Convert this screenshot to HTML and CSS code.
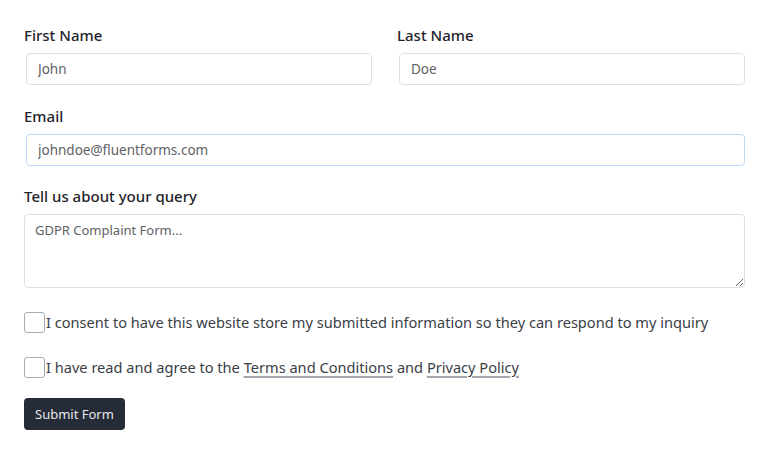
FILE: index.html
```html
<!DOCTYPE html>
<html lang="en">
<head>
<meta charset="utf-8">
<title>GDPR Form</title>
<link rel="stylesheet" href="styles.css">
</head>
<body>
<form class="form">
  <div class="row">
    <div class="field">
      <label class="label" for="fn">First Name</label>
      <input class="input" id="fn" type="text" value="John">
    </div>
    <div class="field">
      <label class="label" for="ln">Last Name</label>
      <input class="input" id="ln" type="text" value="Doe">
    </div>
  </div>
  <div class="field field-tight">
    <label class="label" for="em">Email</label>
    <input class="input input-focus" id="em" type="text" value="johndoe@fluentforms.com">
  </div>
  <div class="field field-last">
    <label class="label" for="q">Tell us about your query</label>
    <textarea class="textarea" id="q" placeholder="GDPR Complaint Form..."></textarea>
  </div>
  <label class="check">
    <input class="box" type="checkbox">
    <span>I consent to have this website store my submitted information so they can respond to my inquiry</span>
  </label>
  <label class="check">
    <input class="box" type="checkbox">
    <span>I have read and agree to the <a class="link" href="#">Terms and Conditions</a> and <a class="link" href="#">Privacy Policy</a></span>
  </label>
  <div class="actions">
    <button class="btn" type="button">Submit Form</button>
  </div>
</form>
</body>
</html>
```
FILE: styles.css
```css
* { box-sizing: border-box; }
html, body { margin: 0; background: #fff; }
body {
  font-family: "Noto Sans", "Open Sans", sans-serif;
  color: #2b2f36;
}
.form {
  padding: 25px 23px 0 24px;
  display: flex;
  flex-direction: column;
}
.row {
  display: grid;
  grid-template-columns: 1fr 1fr;
  column-gap: 25px;
}
.field {
  display: flex;
  flex-direction: column;
  margin-bottom: 21px;
}
.field-tight { margin-bottom: 20px; }
.field-last { margin-bottom: 22px; }
.label {
  font-size: 15px;
  font-weight: 500;
  line-height: 20px;
  color: #1f232b;
  margin-bottom: 8px;
}
.input {
  height: 32px;
  margin-left: 2px;
  border: 1px solid #dcdfe6;
  border-radius: 4px;
  padding: 0 11px;
  font-family: inherit;
  font-size: 13.5px;
  color: #606266;
  background: #fff;
  outline: none;
}
.input-focus {
  border: 1.5px solid #bcd9f7;
}
.textarea {
  height: 74px;
  border: 1px solid #dcdfe6;
  border-radius: 4px;
  padding: 6px 10px;
  font-family: inherit;
  font-size: 13px;
  color: #606266;
  resize: vertical;
  outline: none;
}
.textarea::placeholder { color: #606266; opacity: 1; }
.check {
  display: flex;
  align-items: center;
  font-size: 14.6px;
  line-height: 24px;
  color: #3a3e46;
  margin-bottom: 21px;
}
.box {
  appearance: none;
  -webkit-appearance: none;
  width: 21px;
  height: 21px;
  margin: 0 1px 0 0;
  border: 1px solid #a8abb0;
  border-radius: 3px;
  background: #fff;
  flex: none;
}
.link {
  color: inherit;
  text-decoration: underline;
  text-decoration-color: #a3a6ad;
  text-decoration-thickness: 2px;
  text-underline-offset: 3px;
}
.actions { display: flex; margin-top: -2px; }
.btn {
  height: 32px;
  padding: 0 11px;
  border: none;
  border-radius: 4px;
  background: #252b37;
  color: #e6e8ea;
  font-family: inherit;
  font-size: 13px;
}
```
